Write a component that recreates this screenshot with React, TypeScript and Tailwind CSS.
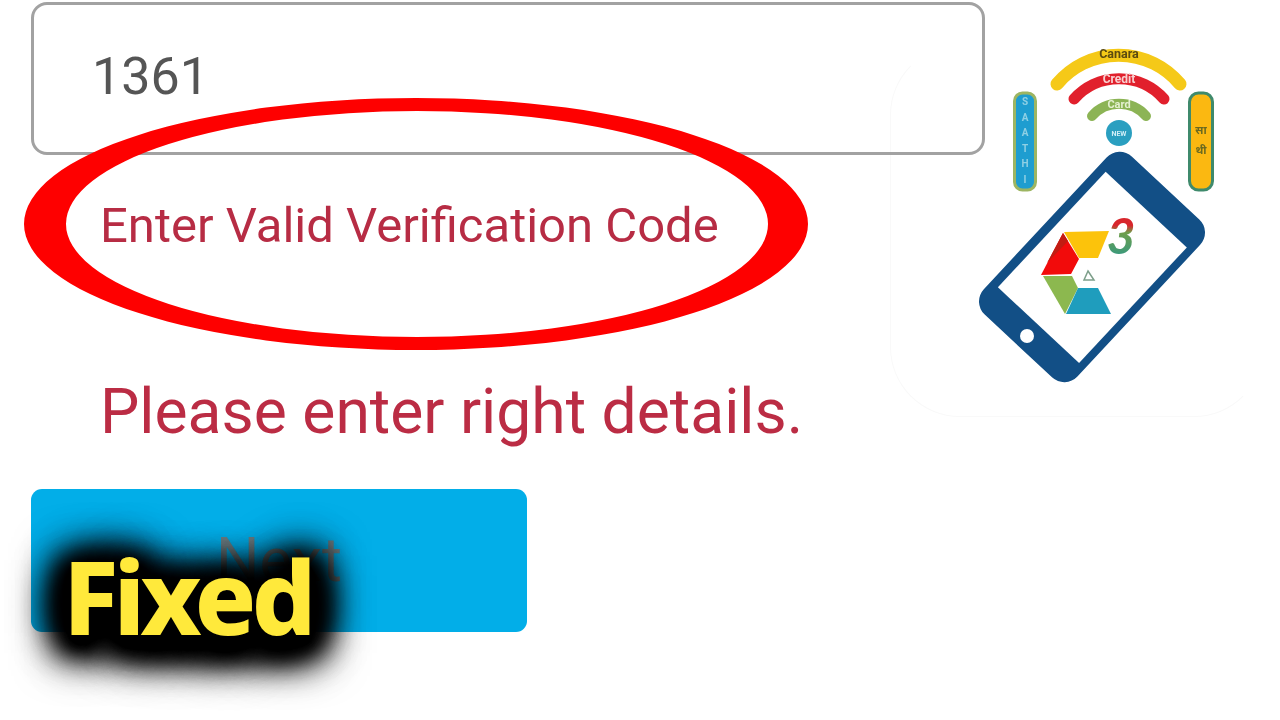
export default function App() {
  return (
    <div className="relative w-[1280px] h-[720px] overflow-hidden bg-white font-['Roboto',sans-serif]">
      {/* App icon card */}
      <div className="absolute left-[890px] top-[45px] w-[374px] h-[372px] rounded-[70px] border border-[#f9f9f9] border-t-transparent border-r-transparent">
        <svg className="absolute left-0 top-0" width="390" height="372" viewBox="890 45 390 372">
          <defs>
            <linearGradient id="three" x1="0" y1="0" x2="0" y2="1">
              <stop offset="0.34" stopColor="#d8262c" />
              <stop offset="0.46" stopColor="#6f9e4a" />
              <stop offset="0.8" stopColor="#3f9a78" />
              <stop offset="1" stopColor="#1f7fae" />
            </linearGradient>
          </defs>
          <g className="blur-[0.6px]">
            <path d="M1056 83 A80 80 0 0 1 1179 83" fill="none" stroke="#f5c918" strokeWidth="13" strokeLinecap="round" />
            <path d="M1073 98 A60 60 0 0 1 1163 98" fill="none" stroke="#e1202c" strokeWidth="11" strokeLinecap="round" />
            <path d="M1091 115 A36 36 0 0 1 1145 115" fill="none" stroke="#8cb455" strokeWidth="10" strokeLinecap="round" />
            <text x="1118" y="57" textAnchor="middle" fontSize="12.5" fontWeight="700" fontFamily="Roboto" fill="#5b4a10">Canara</text>
            <text x="1118" y="82" textAnchor="middle" fontSize="12" fontWeight="700" fontFamily="Roboto" fill="#f8d0d0">Credit</text>
            <text x="1118" y="107" textAnchor="middle" fontSize="11" fontWeight="700" fontFamily="Roboto" fill="#e4f0d0">Card</text>
            <circle cx="1118" cy="132" r="13" fill="#2a9fc0" />
            <text x="1118" y="135" textAnchor="middle" fontSize="7" fontWeight="700" fontFamily="Roboto" fill="#d0eef6">NEW</text>

            <rect x="1013.5" y="92" width="21" height="97" rx="8" fill="#1e9dd0" stroke="#9db562" strokeWidth="3" />
            {["S", "A", "A", "T", "H", "I"].map((c, i) => (
              <text key={i} x="1024" y={104 + i * 15.5} textAnchor="middle" fontSize="10" fontWeight="700" fontFamily="Roboto" fill="#8fd0e4">{c}</text>
            ))}
            <rect x="1188.5" y="92" width="23" height="97" rx="9" fill="#fbb811" stroke="#3f8a6c" strokeWidth="3" />
            <text x="1200" y="133" textAnchor="middle" fontSize="11" fontWeight="700" fontFamily="'Noto Sans'" fill="#6b6a20">सा</text>
            <text x="1200" y="153" textAnchor="middle" fontSize="11" fontWeight="700" fontFamily="'Noto Sans'" fill="#6b6a20">थी</text>

            {/* phone */}
            <g transform="rotate(43 1091 266)">
              <rect x="1027" y="158" width="128" height="216" rx="18" fill="#124f86" />
              <rect x="1036" y="187" width="111" height="158" fill="#fff" />
            </g>
            <circle cx="1026" cy="335" r="7" fill="#fff" />

            <polygon points="1063,231 1108,230 1097,257 1078,257" fill="#fcc30b" />
            <polygon points="1062,232 1078,258 1070,273 1040,274" fill="#f20b0b" />
            <polygon points="1062,232 1067,240 1046,262" fill="#c21c12" />
            <polygon points="1042,275 1071,275 1077,287 1064,313" fill="#8cb84f" />
            <polygon points="1077,287 1097,287 1110,313 1065,313" fill="#1f9dbd" />
            <polygon points="1087,270 1093,279 1083,279" fill="none" stroke="#7d9f8a" strokeWidth="1.5" />
            <text x="1120" y="253" textAnchor="middle" fontSize="50" fontWeight="700" fontStyle="italic" fontFamily="Lato" fill="url(#three)">3</text>
          </g>
        </svg>
      </div>

      {/* Form */}
      <div className="relative flex flex-col pl-[31px] pt-[2px]">
        <div className="flex items-center w-[954px] h-[153px] pl-[58px] pb-[4px] border-[3px] border-[#a2a2a2] rounded-[16px] text-[52px] text-[#555555]">
          1361
        </div>
        <p className="mt-[41px] ml-[69px] text-[49px] leading-[60px] text-[#b72c44]">Enter Valid Verification Code</p>
        <p className="mt-[118px] ml-[69px] text-[62.4px] leading-[76px] text-[#bb2c44]">Please enter right details.</p>
        <div className="flex items-center justify-center mt-[39px] w-[496px] h-[143px] rounded-[11px] bg-[#02aee8] text-[61px] text-[#6f7f85]">
          Next
        </div>
      </div>

      {/* Red highlight ring */}
      <svg className="absolute left-[24px] top-[98px]" width="784" height="252" viewBox="24 98 784 252">
        <path
          fillRule="evenodd"
          fill="#fe0000"
          d="M24 224 A392 126 0 1 0 808 224 A392 126 0 1 0 24 224 Z M66 224 A351 113 0 1 1 768 224 A351 113 0 1 1 66 224 Z"
        />
      </svg>

      {/* Thumbnail label */}
      <div className="absolute left-[63px] top-[537px] font-['Noto_Sans',sans-serif] font-extrabold tracking-[-5px] text-[102px] leading-[118px] text-[#ffe93b] [text-shadow:-8px_-2px_50px_#000,8px_-2px_50px_#000,-8px_18px_50px_#000,8px_18px_50px_#000,-8px_-2px_40px_#000,8px_-2px_40px_#000,-8px_16px_40px_#000,8px_16px_40px_#000,-8px_2px_30px_#000,8px_2px_30px_#000,-8px_14px_30px_#000,8px_14px_30px_#000,0_8px_24px_#000,0_8px_24px_#000,0_8px_14px_#000,0_8px_14px_#000]">
        Fixed
      </div>
    </div>
  );
}
